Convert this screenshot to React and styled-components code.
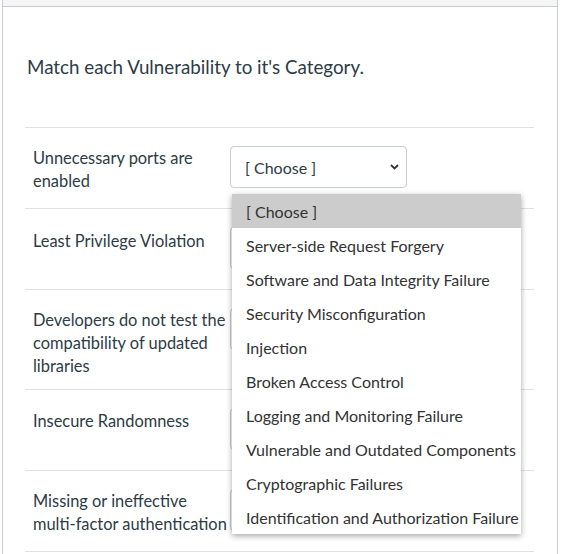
import React from "react";
import styled, { createGlobalStyle } from "styled-components";

const Global = createGlobalStyle`
  html, body { margin: 0; padding: 0; background: #fff; }
  body { font-family: Lato, "Open Sans", sans-serif; color: #2d3b45; }
`;

const Panel = styled.div`
  margin-left: 2px;
  width: 556px;
  height: 554px;
  box-sizing: border-box;
  border-left: 1px solid #c7cdd1;
  border-right: 1px solid #c7cdd1;
  overflow: hidden;
`;

const Header = styled.div`
  height: 6px;
  background: #f5f5f5;
  border-bottom: 1px solid #c7cdd1;
`;

const Body = styled.div`
  padding: 46px 23px 0 22px;
`;

const Title = styled.div`
  font-size: 18.8px;
  line-height: 27px;
  margin-bottom: 47px;
  padding-left: 2px;
`;

const Row = styled.div`
  display: flex;
  align-items: flex-start;
  border-top: 1px solid #dfe2e4;
  padding: 18px 0 12px 8px;
`;

const LastLine = styled.div`
  border-top: 1px solid #dfe2e4;
`;

const Label = styled.div`
  width: 197px;
  flex: none;
  font-size: 16.4px;
  line-height: 23px;
  padding-top: ${(p) => p.$pt || 0}px;
`;

const NoWrap = styled.span`
  white-space: nowrap;
`;

const SelectWrap = styled.div`
  position: relative;
  margin: 0 0 8px;
`;

const SelectBox = styled.div`
  width: 177px;
  height: 42px;
  box-sizing: border-box;
  border: 1px solid #c7cdd1;
  border-radius: 4px;
  background: #fff;
  display: flex;
  align-items: center;
  justify-content: space-between;
  padding: 0 7px 0 14px;
  font-size: 16px;
  color: #2d3b45;
`;

const List = styled.div`
  position: absolute;
  top: 48px;
  left: 2px;
  width: 289px;
  background: #fff;
  box-shadow: 0 2px 6px rgba(0, 0, 0, 0.35);
  z-index: 10;
`;

const Option = styled.div`
  height: 34px;
  display: flex;
  align-items: center;
  padding-left: 14px;
  font-size: 16px;
  color: #333;
  white-space: nowrap;
  background: ${(p) => (p.$active ? "#cccccc" : "#fff")};
`;

const Chevron = () => (
  <svg width="9" height="6" viewBox="0 0 9 6">
    <path d="M1 1 L4.5 4.5 L8 1" fill="none" stroke="#333" strokeWidth="1.8" />
  </svg>
);

const options = [
  "[ Choose ]",
  "Server-side Request Forgery",
  "Software and Data Integrity Failure",
  "Security Misconfiguration",
  "Injection",
  "Broken Access Control",
  "Logging and Monitoring Failure",
  "Vulnerable and Outdated Components",
  "Cryptographic Failures",
  "Identification and Authorization Failure",
];

const rows = [
  { text: "Unnecessary ports are enabled", pt: 0 },
  { text: "Least Privilege Violation", pt: 2 },
  { text: "Developers do not test the compatibility of updated libraries", pt: 0 },
  { text: "Insecure Randomness", pt: 1 },
  {
    text: (
      <>
        Missing or ineffective <NoWrap>multi-factor</NoWrap> authentication
      </>
    ),
    pt: 0,
  },
];

export default function App() {
  return (
    <>
      <Global />
      <Panel>
        <Header />
        <Body>
          <Title>Match each Vulnerability to it's Category.</Title>
          {rows.map((r, i) => (
            <Row key={i}>
              <Label $pt={r.pt}>{r.text}</Label>
              <SelectWrap>
                <SelectBox>
                  <span>[ Choose ]</span>
                  <Chevron />
                </SelectBox>
                {i === 0 && (
                  <List>
                    {options.map((o, j) => (
                      <Option key={o} $active={j === 0}>
                        {o}
                      </Option>
                    ))}
                  </List>
                )}
              </SelectWrap>
            </Row>
          ))}
          <LastLine />
        </Body>
      </Panel>
    </>
  );
}
